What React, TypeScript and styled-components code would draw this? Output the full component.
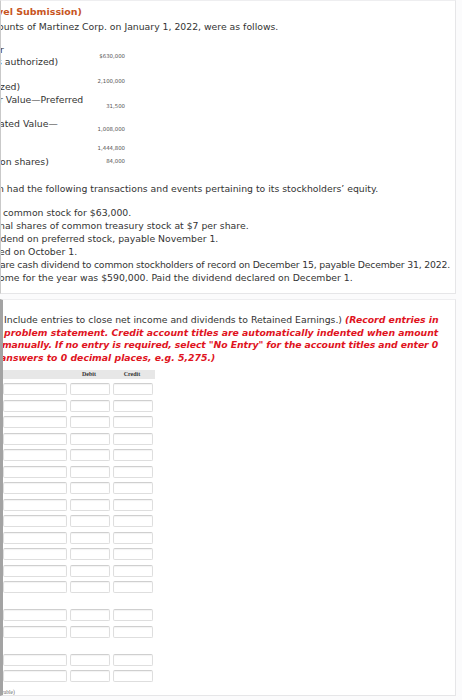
import * as React from "react";
import styled, {createGlobalStyle} from "styled-components";

const textColor = "#333";
const redColor = "#e0141e";
const bodySize = "9.3px";

const GlobalStyle = createGlobalStyle`
	html, body {
		margin: 0;
		padding: 0;
		background: #fbfbfc;
		overflow: hidden;
	}
	body {
		font-family: "DejaVu Sans", Verdana, sans-serif;
		color: ${textColor};
	}
`;

const Page = styled.div`
	width: 462px;
	height: 700px;
	display: flex;
	flex-direction: column;
	gap: 5px;
`;

const Card = styled.section<{$bar?: boolean}>`
	background: #fff;
	width: 456px;
	border-right: 1px solid #e6e6e8;
	border-bottom: 1px solid #e6e6e8;
	border-top: 1px solid #eeeef0;
	border-left: ${(p) => (p.$bar ? "3px solid #a3a3a3" : "1px solid #c9c9c9")};
	overflow: hidden;
	box-sizing: border-box;
	flex-shrink: 0;
`;

const Line = styled.div<{$shift?: number; $tight?: number}>`
	white-space: nowrap;
	margin-left: ${(p) => p.$shift ?? 0}px;
	letter-spacing: ${(p) => (p.$tight ? `-${p.$tight}px` : "normal")};
`;

const Title = styled(Line)`
	font-size: 9.5px;
	font-weight: 700;
	color: #c8551f;
	line-height: 13px;
	margin-top: 4px;
`;

const Intro = styled(Line)`
	font-size: ${bodySize};
	line-height: 13px;
	margin-top: 2px;
`;

const Balance = styled.div`
	display: flex;
	margin-top: 11px;
`;

const Labels = styled.div`
	width: 95px;
	font-size: ${bodySize};
	line-height: 12.4px;
`;

const Amounts = styled.div`
	width: 29px;
	display: flex;
	flex-direction: column;
	align-items: flex-end;
`;

const Amount = styled.div<{$top: number}>`
	font-size: 5.4px;
	line-height: 6px;
	color: #555;
	margin-top: ${(p) => p.$top}px;
	white-space: nowrap;
`;

const Paragraph = styled.div`
	font-size: ${bodySize};
	line-height: 13px;
	margin-top: 14px;
	padding-bottom: 9px;
`;

const ListBlock = styled.div`
	margin-top: 11px;
`;

const Instruction = styled.div`
	font-size: ${bodySize};
	line-height: 12.5px;
	margin-top: 14px;
`;

const Red = styled.span`
	color: ${redColor};
	font-weight: 700;
	font-style: italic;
`;

const Journal = styled.div`
	display: grid;
	grid-template-columns: 64px 40px 40px;
	column-gap: 3px;
	row-gap: 4.5px;
	margin-top: 6px;
	width: 150px;
`;

const HeadBar = styled.div`
	grid-column: 1 / 4;
	display: grid;
	grid-template-columns: 64px 40px 40px;
	column-gap: 3px;
	background: #e7e7e7;
	height: 9px;
	width: 153px;
	margin-left: -1px;
	margin-bottom: -0.5px;
`;

const HeadCell = styled.div`
	font-family: "Liberation Serif", "Times New Roman", serif;
	font-size: 6px;
	font-weight: 700;
	line-height: 9px;
	text-align: center;
	color: #333;
`;

const Field = styled.div`
	height: 12px;
	box-sizing: border-box;
	border: 1px solid #dedede;
	border-top-color: #cfcfcf;
	border-radius: 2px;
	box-shadow: inset 0 1px 1px rgba(0, 0, 0, 0.05);
	background: #fff;
`;

const Spacer = styled.div`
	grid-column: 1 / 4;
	height: 7px;
`;

const Footnote = styled.div`
	font-family: "Liberation Serif", "Times New Roman", serif;
	font-size: 5.5px;
	color: #666;
	margin-top: 7px;
	margin-left: -2px;
	white-space: nowrap;
`;

const labels: [string, number][] = [
	["r", -1],
	["s authorized)", -4],
	["", 0],
	["zed)", -1],
	["r Value\u2014Preferred", -2],
	["", 0],
	["ated Value\u2014", -2],
	["", 0],
	["", 0],
	["on shares)", -1],
];

const amounts: [string, number][] = [
	["$630,000", 9],
	["2,100,000", 19],
	["31,500", 19],
	["1,008,000", 17],
	["1,444,800", 13],
	["84,000", 7],
];

const events: [string, number, number][] = [
	[" common stock for $63,000.", 2, 0],
	["nal shares of common treasury stock at $7 per share.", -2, 0],
	["idend on preferred stock, payable November 1.", -3, 0],
	["ed on October 1.", -2, 0],
	["are cash dividend to common stockholders of record on December 15, payable December 31, 2022.", -1, 0.18],
	["ome for the year was $590,000. Paid the dividend declared on December 1.", -2, 0],
];

const groups = [13, 2, 2];

export default function App() {
	return (
		<>
			<GlobalStyle />
			<Page>
				<Card>
					<Title $shift={-4}>vel Submission)</Title>
					<Intro $shift={-3}>ounts of Martinez Corp. on January 1, 2022, were as follows.</Intro>
					<Balance>
						<Labels>
							{labels.map(([l, s], i) => (
								<Line key={i} $shift={s}>
									{l || "\u00a0"}
								</Line>
							))}
						</Labels>
						<Amounts>
							{amounts.map(([a, top]) => (
								<Amount key={a} $top={top}>
									{a}
								</Amount>
							))}
						</Amounts>
					</Balance>
					<Paragraph>
						<Line $shift={-3}>n had the following transactions and events pertaining to its stockholders&rsquo; equity.</Line>
						<ListBlock>
							{events.map(([t, s, k]) => (
								<Line key={t} $shift={s} $tight={k}>
									{t}
								</Line>
							))}
						</ListBlock>
					</Paragraph>
				</Card>
				<Card $bar>
					<Instruction>
						<Line $shift={1}>
							Include entries to close net income and dividends to Retained Earnings.) <Red>(Record entries in</Red>
						</Line>
						<Line $shift={1}>
							<Red> problem statement. Credit account titles are automatically indented when amount</Red>
						</Line>
						<Line $shift={-1} $tight={0.08}>
							<Red>manually. If no entry is required, select "No Entry" for the account titles and enter 0</Red>
						</Line>
						<Line $shift={-3}>
							<Red>answers to 0 decimal places, e.g. 5,275.)</Red>
						</Line>
					</Instruction>
					<Journal>
						<HeadBar>
							<HeadCell />
							<HeadCell>Debit</HeadCell>
							<HeadCell>Credit</HeadCell>
						</HeadBar>
						{groups.map((count, g) => (
							<React.Fragment key={g}>
								{g > 0 && <Spacer />}
								{Array.from({length: count}).map((_, r) => (
									<React.Fragment key={r}>
										<Field />
										<Field />
										<Field />
									</React.Fragment>
								))}
							</React.Fragment>
						))}
					</Journal>
					<Footnote>yable)</Footnote>
				</Card>
			</Page>
		</>
	);
}
